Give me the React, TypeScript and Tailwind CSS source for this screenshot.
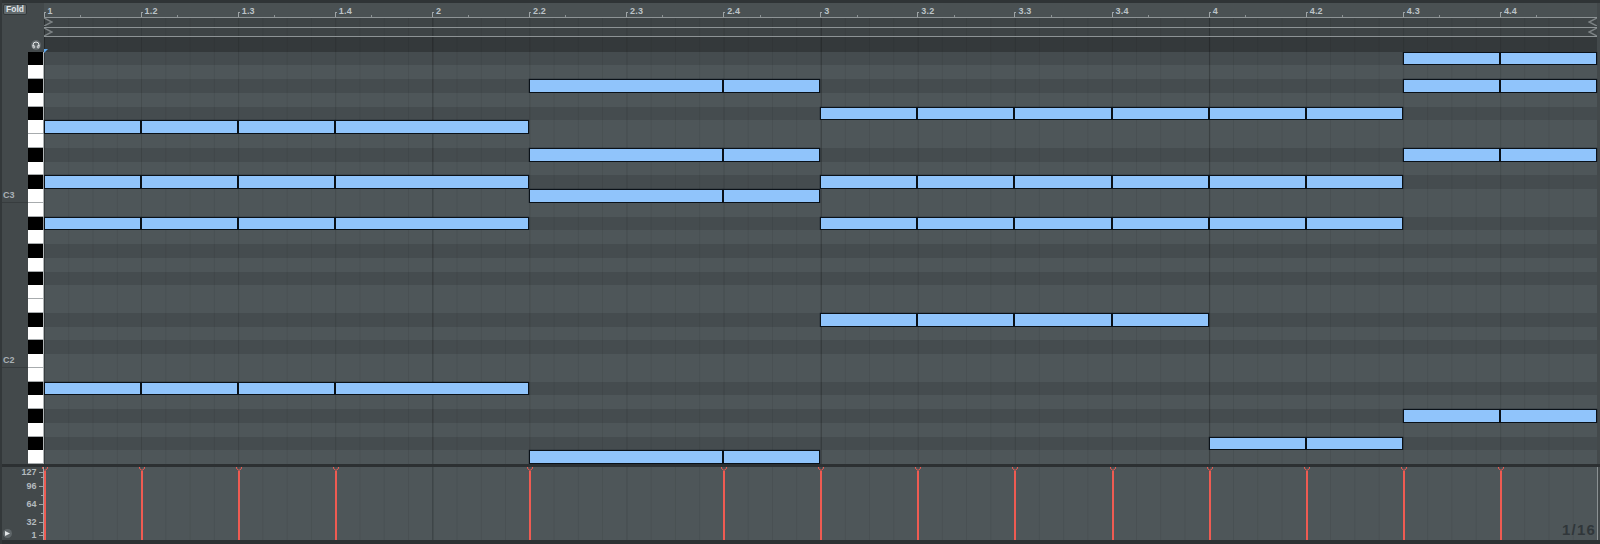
import { Headphones } from "lucide-react";

// 16 steps across, 30 pitch rows
const steps = ["1", "1.2", "1.3", "1.4", "2", "2.2", "2.3", "2.4", "3", "3.2", "3.3", "3.4", "4", "4.2", "4.3", "4.4"];
const blackRows = [0, 2, 4, 7, 9, 12, 14, 16, 19, 21, 24, 26, 28];
const gridLines =
  "bg-[linear-gradient(to_right,#00000012_1px,transparent_1px),linear-gradient(to_right,#00000010_1px,transparent_1px),linear-gradient(to_right,#00000030_1px,transparent_1px)] bg-[size:24.275px_100%,97.1px_100%,388.4px_100%]";
const laneCols = "grid grid-cols-[repeat(16,97.1px)]";

// [0, 1, 3] -> note pieces 0-1 and 1-3
const chunks = (edges: number[]) => edges.slice(0, -1).map((s, i) => ({ s, e: edges[i + 1] }));
const first = chunks([0, 1, 2, 3, 5]);
const second = chunks([5, 7, 8]);
const third = chunks([8, 9, 10, 11, 12, 13, 14]);
const last = chunks([14, 15, 16]);

const notes: Record<number, { s: number; e: number }[]> = {
  0: last,
  2: [...second, ...last],
  4: third,
  5: first,
  7: [...second, ...last],
  9: [...first, ...third],
  10: second,
  12: [...first, ...third],
  19: chunks([8, 9, 10, 11, 12]),
  24: first,
  26: last,
  28: chunks([12, 13, 14]),
  29: second,
};

const velocity = [0, 1, 2, 3, 5, 7, 8, 9, 10, 11, 12, 13, 14, 15];

const Chevron = ({ flip }: { flip?: boolean }) => (
  <svg width="9" height="8" viewBox="0 0 9 8" className={flip ? "rotate-180" : ""}>
    <polyline points="0,0 8,4 0,8" fill="none" stroke="#7d8385" strokeWidth="1.4" />
  </svg>
);

const Track = () => (
  <div className={`flex h-[9.5px] items-center justify-between border-t border-[#8d9395] bg-[#3e4446] ${gridLines}`}>
    <Chevron />
    <Chevron flip />
  </div>
);

const Row = ({ index }: { index: number }) => {
  const black = blackRows.includes(index);
  const label = index === 10 ? "C3" : index === 22 ? "C2" : null;
  return (
    <div className="flex h-[13.75px]">
      <div className={`flex w-[27.5px] items-center pl-[3px] text-[9px] font-bold leading-none text-[#a9b1b6] ${label ? "border-b border-[#373c3e]" : ""}`}>
        {label}
      </div>
      <div className={`w-[16px] border-r border-[#b0b5b7] ${black ? "bg-black" : "border-b border-b-[#a7abad] bg-white"}`} />
      <div className={`w-[1553.6px] ${laneCols} ${gridLines} ${black ? "bg-[#454c4f]" : "bg-[#4e5659]"}`}>
        {(notes[index] ?? []).map((n) => (
          <div
            key={n.s}
            className="h-full border border-[#0a1118] bg-[#90c4fb] shadow-[0_0_1px_#0a1118]"
            style={{ gridColumn: `${n.s + 1} / ${n.e + 1}` }}
          />
        ))}
      </div>
    </div>
  );
};

const App = () => {
  return (
    <div className="relative flex h-[544px] w-[1600px] flex-col overflow-hidden border-l-2 border-[#33383a] bg-[#43494b] font-['Liberation_Sans',sans-serif]">
      <div className="-ml-[2px] h-[3px] bg-[#2f3436]" />

      {/* ruler + header */}
      <div className="-ml-[2px] flex h-[48.5px]">
        <div className="flex w-[43.5px] flex-col pl-[3px] pt-[1px]">
          <div className="flex h-[11px] w-[24px] items-center justify-center rounded-[2px] border border-[#33383a] bg-[#626a6d] text-[8.5px] font-bold leading-none text-[#dfe3e5]">
            Fold
          </div>
          <div className="ml-[28px] mt-[25px] flex h-[10px] w-[10px] items-center justify-center rounded-full bg-[#5f6669] text-[#e3e6e8]">
            <Headphones size={8} strokeWidth={3} />
          </div>
        </div>
        <div className="relative flex w-[1553.6px] flex-col">
          <div className={`${laneCols} h-[14px] bg-[#4a5153]`}>
            {steps.map((step) => (
              <div
                key={step}
                className="flex h-full items-end gap-[2px] bg-[linear-gradient(to_right,#8d9395_1px,transparent_1px)] bg-[size:24.275px_2px] bg-bottom bg-no-repeat"
              >
                <div className="h-[5px] w-[2px] border-l border-t border-[#9da3a5]" />
                <span className="mb-[1px] text-[9px] font-bold leading-none tracking-[0.2px] text-[#bcc3c7]">{step}</span>
              </div>
            ))}
          </div>
          <Track />
          <Track />
          <div className={`h-[15.5px] border-t border-[#8d9395] bg-[#34393b] ${gridLines}`} />
          <svg className="absolute bottom-[-1px] left-0" width="4" height="4" viewBox="0 0 4 4">
            <polygon points="0,0 4,0 0,4" fill="#5fa9ef" />
          </svg>
        </div>
      </div>

      {/* piano roll */}
      <div className="-ml-[2px] flex flex-col">
        {Array.from({ length: 30 }, (_, i) => (
          <Row key={i} index={i} />
        ))}
      </div>

      <div className="-ml-[2px] h-[3px] bg-[#2c3032]" />

      {/* velocity */}
      <div className="-ml-[2px] flex h-[73px]">
        <div className="relative flex w-[43.5px] flex-col items-end border-r border-[#a0a5a7] text-[9px] font-bold leading-[10px] text-[#b4bbbf]">
          {[
            { v: "127", mt: "mt-0" },
            { v: "96", mt: "mt-[4px]" },
            { v: "64", mt: "mt-[8px]" },
            { v: "32", mt: "mt-[8px]" },
            { v: "1", mt: "mt-[3px]" },
          ].map(({ v, mt }) => (
            <div key={v} className={`flex h-[10px] items-center gap-[2px] ${mt}`}>
              {v}
              <span className="h-px w-[4px] bg-[#9da3a5]" />
            </div>
          ))}
          <svg className="absolute right-0 top-0" width="2" height="73" viewBox="0 0 2 73">
            <path d="M0 10.5H2M0 28.5H2M0 46.5H2M0 65.5H2" stroke="#9da3a5" strokeWidth="1" />
          </svg>
          <div className="absolute bottom-[2px] left-[3px] flex h-[9px] w-[9px] items-center justify-center rounded-full bg-[#5f6669]">
            <svg width="5" height="5" viewBox="0 0 5 5">
              <polygon points="0,0 5,2.5 0,5" fill="#e3e6e8" />
            </svg>
          </div>
        </div>
        <div className={`w-[1553.6px] ${laneCols} ${gridLines} bg-[#4e5659]`}>
          {velocity.map((s) => (
            <div key={s} className="flex flex-col items-start" style={{ gridColumn: `${s + 1}`, gridRow: 1 }}>
              <svg className="-ml-[2px] shrink-0" width="6" height="4" viewBox="0 0 6 4">
                <polyline points="0.5,0 0.5,1.5 3,3.5 5.5,1.5 5.5,0" fill="none" stroke="#ef5b52" strokeWidth="1" />
              </svg>
              <div className="w-[2px] flex-1 bg-[#ef5b52]" />
            </div>
          ))}
        </div>
        <div className="flex-1 border-l border-[#8b9193]" />
      </div>

      <div className="-ml-[2px] flex-1 bg-[#2c3032]" />

      <div className="absolute bottom-[7px] right-[4px] text-[15px] font-bold leading-none tracking-[1.2px] text-[#30363a]">1/16</div>
    </div>
  );
};

export default App;
